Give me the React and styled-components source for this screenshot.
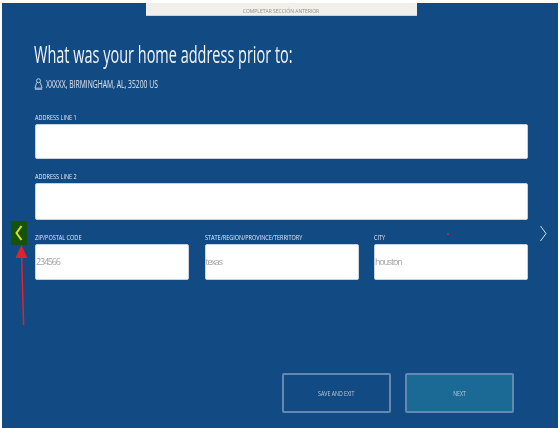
import React from 'react';
import styled, { createGlobalStyle } from 'styled-components';

const GlobalStyle = createGlobalStyle`
  html, body {
    margin: 0;
    padding: 0;
    background: #fff;
  }
`;

const Page = styled.div`
  width: 560px;
  height: 428px;
  padding: 3px 2px 0;
  box-sizing: border-box;
  overflow: hidden;
`;

const Panel = styled.main`
  position: relative;
  height: 425px;
  padding: 0 30px 0 33px;
  box-sizing: border-box;
  display: flex;
  flex-direction: column;
  background: #124a84;
  font-family: 'Open Sans', 'Liberation Sans', sans-serif;
  filter: blur(0.7px);
`;

const TopCard = styled.div`
  align-self: center;
  width: 271px;
  height: 12px;
  margin-right: 1px;
  background: #f0efeb;
  border-bottom: 1px solid #c9d2dc;
  display: flex;
  justify-content: center;
  align-items: flex-end;
  color: #8f8f86;
  font-size: 5px;
  line-height: 8px;
  overflow: hidden;
`;

const Title = styled.h1`
  margin: 24px 0 0 -1px;
  color: #f2f5f9;
  font-size: 23px;
  line-height: 28px;
  font-weight: 400;
  white-space: nowrap;
  transform: scaleX(0.63);
  transform-origin: left center;
`;

const Address = styled.div`
  display: flex;
  align-items: center;
  gap: 3px;
  margin: 8px 0 0 -1px;
  height: 16px;
  color: #dfe6ef;
`;

const AddressText = styled.span`
  font-size: 10px;
  white-space: nowrap;
  transform: scaleX(0.68);
  transform-origin: left center;
`;

const Form = styled.div`
  display: flex;
  flex-direction: column;
  gap: 12px;
  margin-top: 20px;
  width: 493px;
`;

const Row = styled.div`
  display: grid;
  grid-template-columns: ${({ $cols }) => $cols || '1fr'};
  column-gap: 15.5px;
`;

const Field = styled.label`
  display: flex;
  flex-direction: column;
`;

const Label = styled.span`
  height: 12px;
  line-height: 12px;
  font-size: 7px;
  color: #e6ecf3;
  white-space: nowrap;
  transform: scaleX(0.79);
  transform-origin: left center;
`;

const Input = styled.input`
  height: ${({ $h }) => $h || 36}px;
  padding: 0 0 2px;
  box-sizing: border-box;
  width: 100%;
  border: 1px solid #c6d2e0;
  border-radius: 2px;
  background: #fff;
  outline: none;
  font-family: 'Liberation Sans Narrow', 'Open Sans', 'Liberation Sans', sans-serif;
  font-size: 9px;
  letter-spacing: -1.2px;
  color: #a3a3a3;
`;

const Actions = styled.div`
  display: flex;
  gap: 14px;
  margin: 93px 0 0 247px;
`;

const ActionButton = styled.button`
  width: 109px;
  height: 40px;
  padding: 0;
  border: 2px solid #6189b2;
  border-radius: 2px;
  background: ${({ $primary }) => ($primary ? '#1b6a96' : 'transparent')};
  color: #bccbdc;
  font-family: 'Open Sans', 'Liberation Sans', sans-serif;
  font-size: 7px;
  white-space: nowrap;
`;

const ButtonText = styled.span`
  display: inline-block;
  transform: scaleX(0.75);
`;

const PrevNav = styled.div`
  position: absolute;
  left: 9px;
  top: 218px;
  width: 16px;
  height: 24px;
  display: flex;
  align-items: center;
  justify-content: center;
  background: #17520c;
`;

const NextNav = styled.div`
  position: absolute;
  left: 537px;
  top: 222px;
  display: flex;
`;

const Annotation = styled.svg`
  position: absolute;
  left: 13px;
  top: 242px;
`;

const RedDot = styled.span`
  position: absolute;
  left: 445px;
  top: 230px;
  width: 2px;
  height: 2px;
  border-radius: 50%;
  background: #d8243c;
`;

const PersonIcon = () => (
  <svg width="9" height="14" viewBox="0 0 10 14" fill="none" stroke="#dfe6ef" strokeWidth="0.9">
    <circle cx="5" cy="3.4" r="2.2" />
    <path d="M3 5.4 1 11.6h8L7 5.4" />
    <path d="M1 12.8h8" />
  </svg>
);

const App = () => {
  return (
    <Page>
      <GlobalStyle />
      <Panel>
        <TopCard>COMPLETAR SECCIÓN ANTERIOR</TopCard>
        <Title>What was your home address prior to:</Title>
        <Address>
          <PersonIcon />
          <AddressText>XXXXX, BIRMINGHAM, AL, 35200 US</AddressText>
        </Address>
        <Form>
          <Field>
            <Label>ADDRESS LINE 1</Label>
            <Input $h={35} />
          </Field>
          <Field>
            <Label>ADDRESS LINE 2</Label>
            <Input $h={37} />
          </Field>
          <Row $cols="154px 154px 154px">
            <Field>
              <Label>ZIP/POSTAL CODE</Label>
              <Input defaultValue="234566" />
            </Field>
            <Field>
              <Label>STATE/REGION/PROVINCE/TERRITORY</Label>
              <Input defaultValue="texas" />
            </Field>
            <Field>
              <Label>CITY</Label>
              <Input defaultValue="houston" />
            </Field>
          </Row>
        </Form>
        <Actions>
          <ActionButton><ButtonText>SAVE AND EXIT</ButtonText></ActionButton>
          <ActionButton $primary><ButtonText>NEXT</ButtonText></ActionButton>
        </Actions>
        <PrevNav>
          <svg width="8" height="16" viewBox="0 0 8 16" fill="none" stroke="#d6e22a" strokeWidth="2">
            <path d="M6.5 1 1.5 8l5 7" />
          </svg>
        </PrevNav>
        <NextNav>
          <svg width="9" height="17" viewBox="0 0 9 17" fill="none" stroke="#d5deea" strokeWidth="1">
            <path d="M1.5 1 7 8.5 1.5 16" />
          </svg>
        </NextNav>
        <RedDot />
        <Annotation width="14" height="82" viewBox="0 0 14 82">
          <path d="M8.6 80 6.6 10" stroke="#e0222c" strokeWidth="1.5" fill="none" />
          <path d="M6.4 0 12.4 13H0.4z" fill="#e0222c" />
        </Annotation>
      </Panel>
    </Page>
  );
};

export default App;
